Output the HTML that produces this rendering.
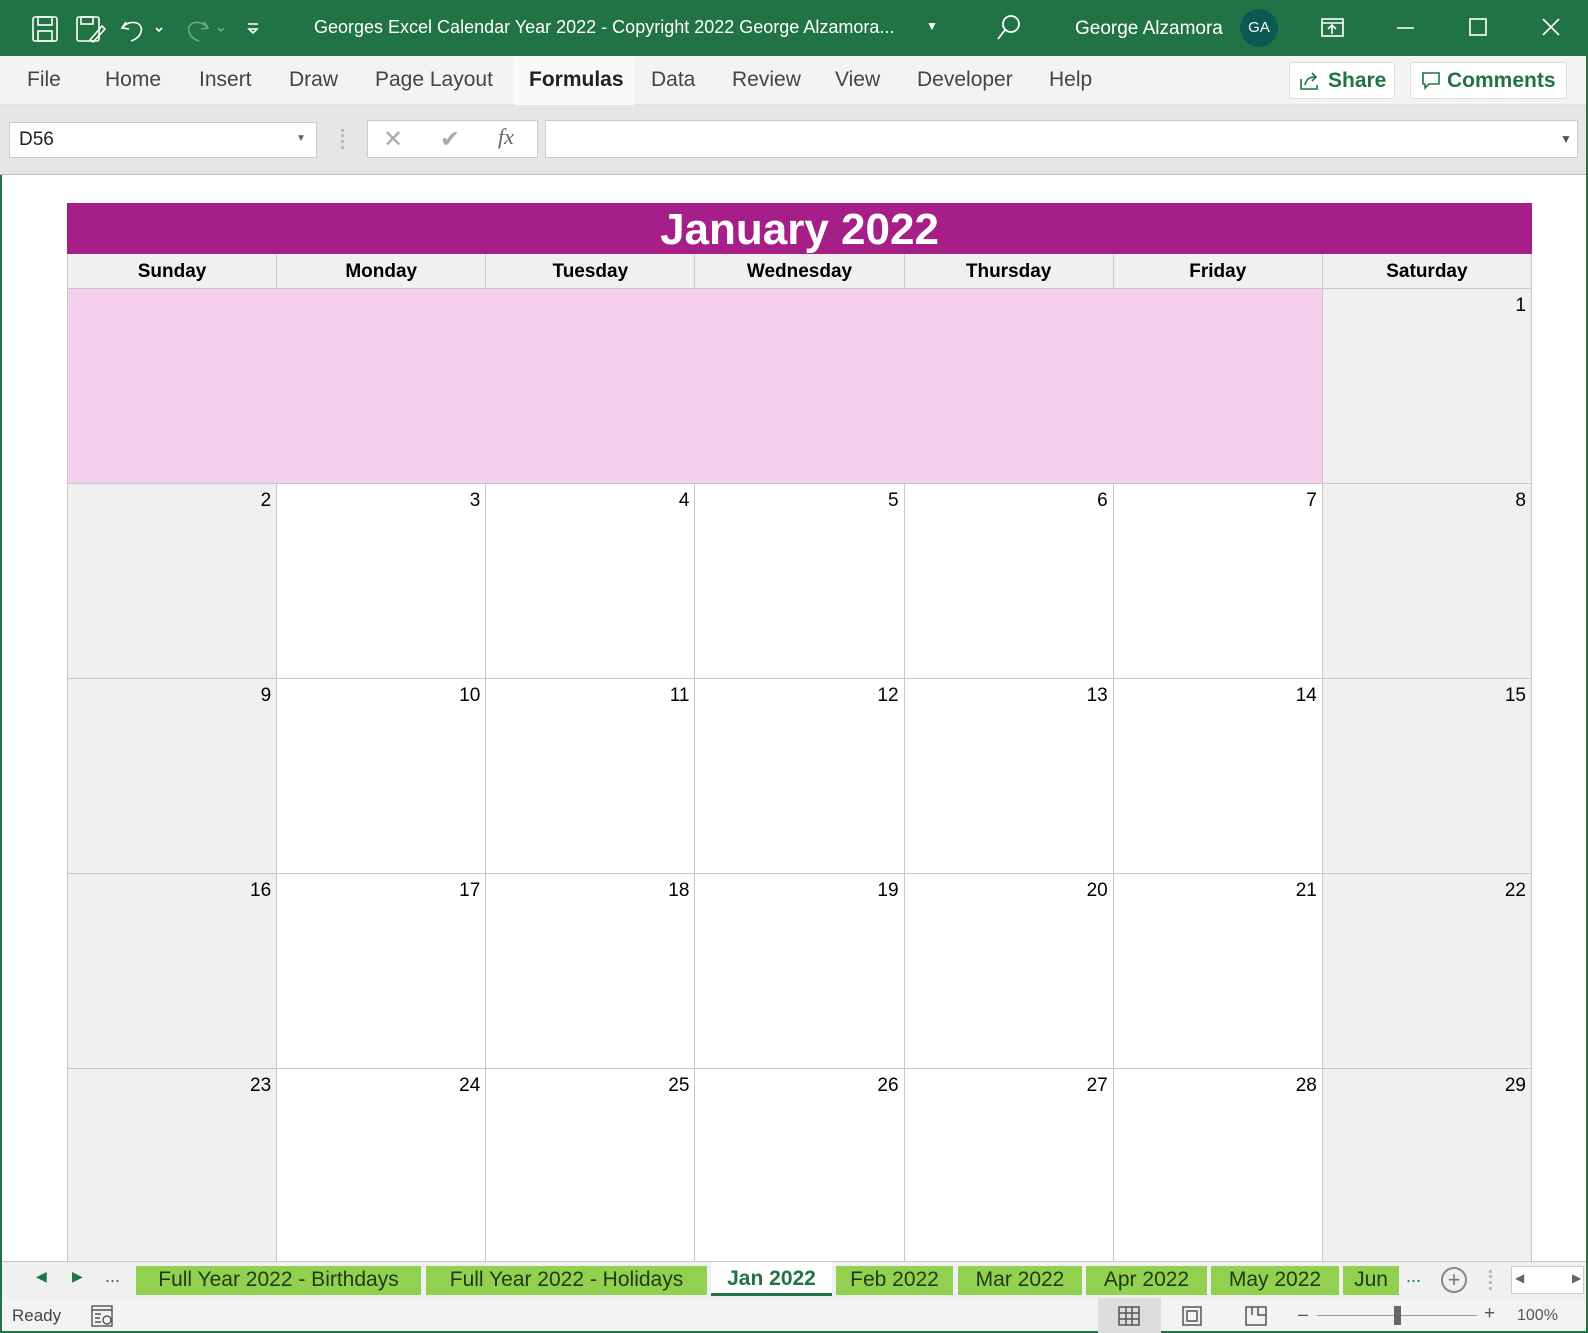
<!DOCTYPE html>
<html><head><meta charset="utf-8"><style>
*{margin:0;padding:0;box-sizing:border-box}
body{width:1588px;height:1333px;position:relative;overflow:hidden;background:#fff;font-family:"Liberation Sans",sans-serif}
.a{position:absolute}
.tb{left:0;top:0;width:1588px;height:56px;background:#217346;color:#fff}
.rib{left:0;top:56px;width:1588px;height:49px;background:#f3f3f3;border-bottom:1px solid #e0e0e0}
.rt{position:absolute;top:12px;font-size:21px;color:#444}
.fb{left:0;top:105px;width:1588px;height:70px;background:#e6e6e6;border-bottom:1px solid #bbb}
.cal{left:67px;top:203px;width:1465px}
.hd{background:#f0f0f0;border-right:1px solid #c8c8c8;border-bottom:1px solid #c8c8c8;font-weight:bold;font-size:19px;text-align:center;line-height:32px;padding-top:2px}
.cell{border-right:1px solid #c8c8c8;border-bottom:1px solid #c8c8c8;font-size:19px;text-align:right;padding:6px 5px 0 0}
.tab{position:absolute;top:4px;height:29px;background:#92d050;color:#1f3a14;font-size:21px;text-align:center;line-height:28px}
</style></head><body>
<div class="a tb">
 <svg class="a" style="left:30px;top:14px" width="240" height="30" viewBox="0 0 240 30" fill="none" stroke="#fff" stroke-width="1.6">
  <rect x="3" y="3" width="24" height="24" rx="2"/><rect x="8" y="3" width="14" height="8"/><rect x="8" y="17" width="14" height="10"/>
  <rect x="47" y="3" width="22" height="24" rx="2"/><rect x="51" y="3" width="12" height="7"/><path d="M60 26 L72 12 L75 15 L63 28Z"/>
  <path d="M96 8 L92 14 L99 15 M93 13 C100 5 114 8 111 18 C109 24 104 26 101 27"/><path d="M126 14 l3 3 l3-3"/>
  <path d="M174 8 L178 14 L171 15 M177 13 C170 5 156 8 159 18 C161 24 166 26 169 27" stroke="#6fa886"/><path d="M188 14 l3 3 l3-3" stroke="#6fa886"/>
  <path d="M218 10 h10 M219 15 l4 4 l4-4 z"/>
 </svg>
 <div class="a" style="left:314px;top:17px;font-size:18px">Georges Excel Calendar Year 2022 - Copyright 2022 George Alzamora...</div>
 <div class="a" style="left:926px;top:19px;font-size:12px">▼</div>
 <svg class="a" style="left:996px;top:14px" width="26" height="28" fill="none" stroke="#fff" stroke-width="1.8"><circle cx="15" cy="10" r="8"/><path d="M9 16 L2 25"/></svg>
 <div class="a" style="left:1075px;top:18px;font-size:19px">George Alzamora</div>
 <div class="a" style="left:1240px;top:9px;width:38px;height:38px;border-radius:50%;background:#0b5a52;font-size:15px;text-align:center;line-height:38px">GA</div>
 <svg class="a" style="left:1320px;top:16px" width="250" height="24" fill="none" stroke="#fff" stroke-width="1.6">
  <rect x="2" y="3" width="21" height="17"/><path d="M2 7 h21 M12 18 v-8 M8 13 l4-4 l4 4"/>
  <path d="M77 12 h17"/><rect x="150" y="3" width="16" height="16"/><path d="M223 3 l16 16 M239 3 l-16 16"/>
 </svg>
</div>
<div class="a rib">
 <div class="a" style="left:514px;top:0;width:120px;height:49px;background:#fafafa"></div>
 <span class="rt" style="left:27px">File</span><span class="rt" style="left:105px">Home</span><span class="rt" style="left:199px">Insert</span><span class="rt" style="left:289px">Draw</span><span class="rt" style="left:375px">Page Layout</span><span class="rt" style="left:529px;color:#222;font-weight:bold">Formulas</span><span class="rt" style="left:651px">Data</span><span class="rt" style="left:732px">Review</span><span class="rt" style="left:835px">View</span><span class="rt" style="left:917px">Developer</span><span class="rt" style="left:1049px">Help</span>
 <div class="a" style="left:1289px;top:6px;width:106px;height:37px;background:#fff;border:1px solid #ddd;border-radius:3px;color:#217346;font-size:21px;font-weight:bold;line-height:35px;padding-left:38px">Share</div>
 <svg class="a" style="left:1299px;top:15px" width="22" height="20" fill="none" stroke="#217346" stroke-width="1.6"><path d="M2 8 v10 h16 v-4 M6 14 C7 8 11 6 16 6 M13 2 l4 4 l-4 4"/></svg>
 <div class="a" style="left:1410px;top:6px;width:157px;height:37px;background:#fff;border:1px solid #ddd;border-radius:3px;color:#217346;font-size:21px;font-weight:bold;line-height:35px;padding-left:36px">Comments</div>
 <svg class="a" style="left:1421px;top:15px" width="22" height="20" fill="none" stroke="#217346" stroke-width="1.6"><path d="M2 2 h16 v11 h-10 l-4 4 v-4 h-2z"/></svg>
</div>
<div class="a fb">
 <div class="a" style="left:9px;top:17px;width:308px;height:36px;background:#fff;border:1px solid #ccc;font-size:19px;line-height:34px;padding-left:9px;color:#222">D56</div>
 <div class="a" style="left:296px;top:28px;font-size:10px;color:#666">▼</div>
 <div class="a" style="left:341px;top:24px;width:3px;height:20px;border-left:3px dotted #bbb"></div>
 <div class="a" style="left:367px;top:15px;width:171px;height:38px;background:#fff;border:1px solid #ccc"></div>
 <div class="a" style="left:383px;top:20px;font-size:24px;color:#aaa">✕</div>
 <div class="a" style="left:440px;top:20px;font-size:24px;color:#aaa">✔</div>
 <div class="a" style="left:498px;top:19px;font-size:22px;color:#666;font-family:'Liberation Serif',serif;font-style:italic">fx</div>
 <div class="a" style="left:545px;top:15px;width:1033px;height:38px;background:#fff;border:1px solid #ccc"></div>
 <div class="a" style="left:1560px;top:27px;font-size:12px;color:#555">▼</div>
</div>
<div class="a" style="left:0;top:175px;width:2px;height:1158px;background:#217346"></div>
<div class="a" style="left:1586px;top:0;width:2px;height:1333px;background:#217346"></div>
<div class="a cal">
 <div style="height:51px;background:#a61e88;color:#fff;font-weight:bold;font-size:44px;text-align:center;line-height:54px">January 2022</div>
 <div style="display:grid;grid-template-columns:repeat(7,1fr);border-left:1px solid #c8c8c8">
  <div class="hd">Sunday</div><div class="hd">Monday</div><div class="hd">Tuesday</div><div class="hd">Wednesday</div><div class="hd">Thursday</div><div class="hd">Friday</div><div class="hd">Saturday</div>
 </div>
 <div style="display:grid;grid-template-columns:repeat(7,1fr);grid-auto-rows:195px;border-left:1px solid #c8c8c8">
  <div class="cell" style="grid-column:span 6;background:#f4cfee"></div><div class="cell" style="background:#f0f0f0">1</div>
  <div class="cell" style="background:#f0f0f0">2</div><div class="cell">3</div><div class="cell">4</div><div class="cell">5</div><div class="cell">6</div><div class="cell">7</div><div class="cell" style="background:#f0f0f0">8</div>
  <div class="cell" style="background:#f0f0f0">9</div><div class="cell">10</div><div class="cell">11</div><div class="cell">12</div><div class="cell">13</div><div class="cell">14</div><div class="cell" style="background:#f0f0f0">15</div>
  <div class="cell" style="background:#f0f0f0">16</div><div class="cell">17</div><div class="cell">18</div><div class="cell">19</div><div class="cell">20</div><div class="cell">21</div><div class="cell" style="background:#f0f0f0">22</div>
  <div class="cell" style="background:#f0f0f0">23</div><div class="cell">24</div><div class="cell">25</div><div class="cell">26</div><div class="cell">27</div><div class="cell">28</div><div class="cell" style="background:#f0f0f0">29</div>
 </div>
</div>
<div class="a" style="left:2px;top:1261px;width:1584px;height:37px;background:#f0f0f0;border-top:1px solid #c8c8c8">
 <div class="a" style="left:34px;top:6px;color:#217346;font-size:14px">◀</div>
 <div class="a" style="left:70px;top:6px;color:#217346;font-size:14px">▶</div>
 <div class="a" style="left:103px;top:4px;color:#217346;font-size:18px">...</div>
 <div class="tab" style="left:134px;width:285px">Full Year 2022 - Birthdays</div>
 <div class="tab" style="left:424px;width:281px">Full Year 2022 - Holidays</div>
 <div class="tab" style="left:709px;width:121px;top:0;height:34px;background:#fff;color:#217346;font-weight:bold;border-bottom:3px solid #217346;line-height:34px">Jan 2022</div>
 <div class="tab" style="left:834px;width:117px">Feb 2022</div>
 <div class="tab" style="left:956px;width:124px">Mar 2022</div>
 <div class="tab" style="left:1084px;width:121px">Apr 2022</div>
 <div class="tab" style="left:1209px;width:128px">May 2022</div>
 <div class="tab" style="left:1341px;width:56px">Jun</div>
 <div class="a" style="left:1404px;top:4px;color:#217346;font-size:18px">...</div>
 <div class="a" style="left:1439px;top:5px;width:26px;height:26px;border:2px solid #888;border-radius:50%;text-align:center;line-height:22px;font-size:22px;color:#777">+</div>
 <div class="a" style="left:1487px;top:8px;width:3px;height:20px;border-left:3px dotted #bbb"></div>
 <div class="a" style="left:1509px;top:4px;width:73px;height:28px;background:#fff;border:1px solid #ccc"></div>
 <div class="a" style="left:1513px;top:9px;font-size:12px;color:#666">◀</div>
 <div class="a" style="left:1570px;top:9px;font-size:12px;color:#666">▶</div>
</div>
<div class="a" style="left:2px;top:1298px;width:1584px;height:35px;background:#f3f3f3;border-bottom:2px solid #217346">
 <div class="a" style="left:10px;top:8px;font-size:17px;color:#444">Ready</div>
 <svg class="a" style="left:88px;top:6px" width="26" height="24" fill="none" stroke="#555" stroke-width="1.4"><rect x="2" y="2" width="20" height="20"/><path d="M2 6 h20 M5 10 h6 M5 14 h5 M5 18 h6"/><circle cx="17" cy="16" r="4"/></svg>
 <div class="a" style="left:1096px;top:0;width:63px;height:35px;background:#ddd"></div>
 <svg class="a" style="left:1115px;top:7px" width="170" height="22" fill="none" stroke="#555" stroke-width="1.5">
  <rect x="2" y="2" width="20" height="18"/><path d="M2 8 h20 M2 14 h20 M9 2 v18 M15 2 v18"/>
  <rect x="66" y="2" width="18" height="18"/><rect x="70" y="6" width="10" height="10"/>
  <path d="M129 2 h20 v18 h-20z M135 2 v8 M141 2 v8 h8"/>
 </svg>
 <div class="a" style="left:1296px;top:6px;font-size:18px;color:#555">–</div>
 <div class="a" style="left:1315px;top:17px;width:160px;height:1px;background:#999"></div>
 <div class="a" style="left:1392px;top:8px;width:7px;height:19px;background:#666"></div>
 <div class="a" style="left:1482px;top:5px;font-size:19px;color:#555">+</div>
 <div class="a" style="left:1515px;top:9px;font-size:16px;color:#555">100%</div>
</div>
</body></html>
